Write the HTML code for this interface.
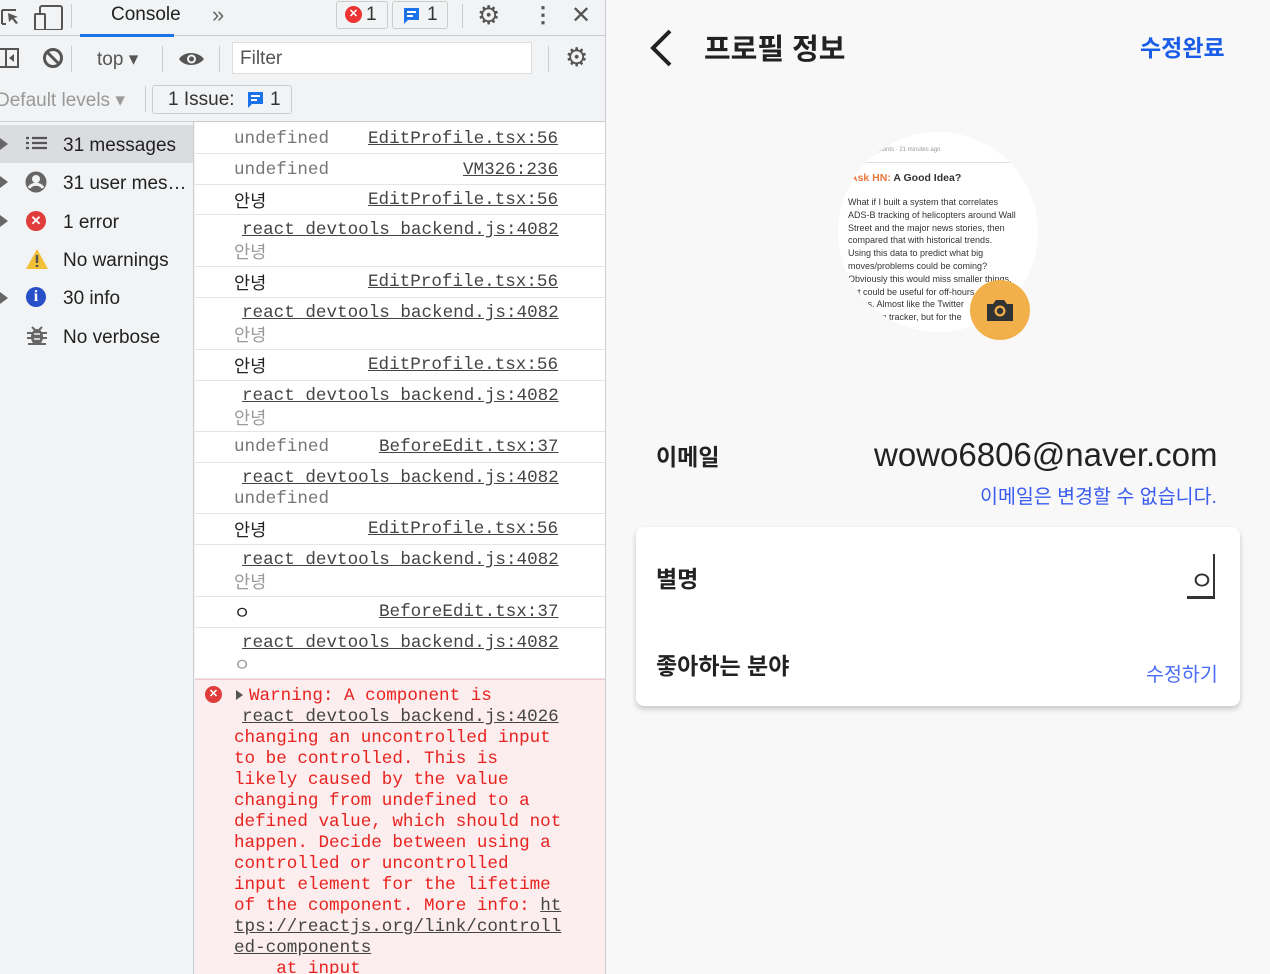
<!DOCTYPE html>
<html><head><meta charset="utf-8"><style>
*{margin:0;padding:0;box-sizing:border-box}
body{width:1270px;height:974px;overflow:hidden;background:#f8f8f8;font-family:"Liberation Sans","Noto Sans CJK KR",sans-serif;position:relative}
.a{position:absolute;white-space:nowrap}
#dt{position:absolute;left:0;top:0;width:606px;height:974px;background:#f1f3f4;border-right:1px solid #cbcdd1;overflow:hidden}
.mono{font-family:"Liberation Mono","Noto Sans CJK KR",monospace;font-size:17.6px}
.row{position:absolute;left:195px;width:410px;border-bottom:1px solid #e5e5e5;background:#fff}
.row .a{margin-top:2px}
.u{text-decoration:underline;color:#444}
.g{color:#777}
.side{font-size:19px;color:#222;margin-top:2px}
.ic{position:absolute;width:20px;height:20px;border-radius:50%;color:#fff;font-size:13px;font-weight:bold;text-align:center;line-height:20px}
.tri{position:absolute;width:0;height:0;border-top:6px solid transparent;border-bottom:6px solid transparent;border-left:8px solid #666}
</style></head><body>
<div id="dt">
 <div class="a" style="left:0;top:0;width:606px;height:36px;border-bottom:1px solid #cbcdd1"></div>
 <svg class="a" style="left:0;top:4px" width="70" height="26"><path d="M2 6h14M2 6v14M2 20h4" stroke="#555" stroke-width="2" fill="none"/><path d="M8 9l10 4-4 1 4 5-2 1-4-5-3 3z" fill="#555"/><rect x="40" y="2" width="22" height="24" rx="2" stroke="#555" stroke-width="2" fill="none"/><rect x="35" y="10" width="10" height="16" rx="1" stroke="#555" stroke-width="2" fill="#f1f3f4"/></svg>
 <div class="a" style="left:71px;top:4px;width:1px;height:24px;background:#ccc"></div>
 <div class="a" style="left:111px;top:4px;font-size:19px;color:#222">Console</div>
 <div class="a" style="left:80px;top:34px;width:94px;height:3px;background:#1a73e8"></div>
 <div class="a" style="left:212px;top:2px;font-size:22px;color:#666">»</div>
 <div class="a" style="left:336px;top:1px;width:52px;height:28px;border:1px solid #ccc;border-radius:3px"></div>
 <div class="ic" style="left:345px;top:6px;width:17px;height:17px;line-height:17px;background:#e33;font-size:11px">✕</div>
 <div class="a" style="left:366px;top:4px;font-size:19px;color:#333">1</div>
 <div class="a" style="left:392px;top:1px;width:56px;height:28px;border:1px solid #ccc;border-radius:3px"></div>
 <svg class="a" style="left:402px;top:6px" width="20" height="20"><path d="M2 2h15v12H6l-4 4z" fill="#1a73e8"/><path d="M5 6h9M5 10h6" stroke="#fff" stroke-width="2"/></svg>
 <div class="a" style="left:427px;top:4px;font-size:19px;color:#333">1</div>
 <div class="a" style="left:462px;top:4px;width:1px;height:24px;background:#ccc"></div>
 <div class="a" style="left:477px;top:0px;font-size:26px;color:#555">⚙</div>
 <div class="a" style="left:532px;top:2px;font-size:22px;color:#555;font-weight:bold">⋮</div>
 <div class="a" style="left:571px;top:1px;font-size:24px;color:#555">✕</div>
 <svg class="a" style="left:0;top:47px" width="24" height="22"><rect x="-2" y="2" width="20" height="18" stroke="#555" stroke-width="2" fill="none"/><path d="M6 2v18" stroke="#555" stroke-width="2"/><path d="M14 7v8l-5-4z" fill="#555"/></svg>
 <svg class="a" style="left:42px;top:47px" width="24" height="24"><circle cx="11" cy="11" r="8.5" stroke="#555" stroke-width="3" fill="none"/><path d="M5 5l12 12" stroke="#555" stroke-width="3"/></svg>
 <div class="a" style="left:71px;top:46px;width:1px;height:26px;background:#ccc"></div>
 <div class="a" style="left:97px;top:48px;font-size:19px;color:#555">top ▾</div>
 <div class="a" style="left:162px;top:46px;width:1px;height:26px;background:#ccc"></div>
 <svg class="a" style="left:178px;top:48px" width="28" height="22"><path d="M1 11C6 3 20 3 26 11C20 19 6 19 1 11z" fill="#555"/><circle cx="13.5" cy="11" r="4.5" fill="#f1f3f4"/><circle cx="13.5" cy="11" r="2.5" fill="#555"/></svg>
 <div class="a" style="left:219px;top:46px;width:1px;height:26px;background:#ccc"></div>
 <div class="a" style="left:232px;top:42px;width:300px;height:32px;background:#fff;border:1px solid #ddd"></div>
 <div class="a" style="left:240px;top:48px;font-size:19px;color:#555">Filter</div>
 <div class="a" style="left:548px;top:46px;width:1px;height:26px;background:#ccc"></div>
 <div class="a" style="left:565px;top:42px;font-size:26px;color:#555">⚙</div>
 <div class="a" style="left:-4px;top:89px;font-size:19px;color:#999">Default levels ▾</div>
 <div class="a" style="left:145px;top:86px;width:1px;height:26px;background:#ccc"></div>
 <div class="a" style="left:152px;top:85px;width:140px;height:29px;border:1px solid #ccc;border-radius:3px"></div>
 <div class="a" style="left:168px;top:89px;font-size:19px;color:#333">1 Issue:</div>
 <svg class="a" style="left:246px;top:90px" width="20" height="20"><path d="M2 2h15v12H6l-4 4z" fill="#1a73e8"/><path d="M5 6h9M5 10h6" stroke="#fff" stroke-width="2"/></svg>
 <div class="a" style="left:270px;top:89px;font-size:19px;color:#333">1</div>
 <div class="a" style="left:0;top:121px;width:606px;height:1px;background:#cbcdd1"></div>
 <div class="a" style="left:0;top:125px;width:193px;height:38px;background:#dadcdf"></div>
 <div class="a" style="left:193px;top:122px;width:1px;height:852px;background:#cbcdd1"></div>
 <div class="tri" style="left:0;top:138px"></div>
 <svg class="a" style="left:25px;top:136px" width="24" height="16"><path d="M1 2h3M1 7h3M1 12h3M7 2h15M7 7h15M7 12h15" stroke="#555" stroke-width="2.2"/></svg>
 <div class="a side" style="left:63px;top:133px">31 messages</div>
 <div class="tri" style="left:0;top:176px"></div>
 <svg class="a" style="left:25px;top:171px" width="22" height="22"><circle cx="11" cy="11" r="10.5" fill="#666"/><circle cx="11" cy="8" r="4" fill="#f1f3f4"/><path d="M4 17c3-5 11-5 14 0" stroke="#f1f3f4" stroke-width="3" fill="none"/></svg>
 <div class="a side" style="left:63px;top:171px">31 user mes…</div>
 <div class="tri" style="left:0;top:215px"></div>
 <div class="ic" style="left:26px;top:211px;background:#e03c3c">✕</div>
 <div class="a side" style="left:63px;top:210px">1 error</div>
 <svg class="a" style="left:25px;top:248px" width="24" height="22"><path d="M12 1L23 21H1z" fill="#f2c037"/><path d="M12 7v8M12 17v2" stroke="#555" stroke-width="2.5"/></svg>
 <div class="a side" style="left:63px;top:248px">No warnings</div>
 <div class="tri" style="left:0;top:292px"></div>
 <div class="ic" style="left:26px;top:287px;background:#2750c8;font-family:'Liberation Serif',serif;font-size:16px">i</div>
 <div class="a side" style="left:63px;top:286px">30 info</div>
 <svg class="a" style="left:26px;top:325px" width="22" height="22"><ellipse cx="11" cy="12" rx="6" ry="8" fill="#666"/><path d="M1 8h20M1 13h20M2 19h18M6 2l3 3M16 2l-3 3" stroke="#666" stroke-width="2"/><path d="M8 9h6M8 14h6" stroke="#f1f3f4" stroke-width="1.5"/></svg>
 <div class="a side" style="left:63px;top:325px">No verbose</div>
 <div class="mono">
 <div class="row" style="top:122px;height:32px"><span class="a g" style="left:39px;top:5px">undefined</span><span class="a u" style="left:173px;top:5px">EditProfile.tsx:56</span></div>
 <div class="row" style="top:154px;height:31px"><span class="a g" style="left:39px;top:4px">undefined</span><span class="a u" style="left:268px;top:4px">VM326:236</span></div>
 <div class="row" style="top:185px;height:30px"><span class="a" style="left:39px;top:1px;color:#222">안녕</span><span class="a u" style="left:173px;top:3px">EditProfile.tsx:56</span></div>
 <div class="row" style="top:215px;height:52px"><span class="a u" style="left:47px;top:3px">react_devtools_backend.js:4082</span><span class="a" style="left:39px;top:22px;color:#999">안녕</span></div>
 <div class="row" style="top:267px;height:31px"><span class="a" style="left:39px;top:1px;color:#222">안녕</span><span class="a u" style="left:173px;top:3px">EditProfile.tsx:56</span></div>
 <div class="row" style="top:298px;height:52px"><span class="a u" style="left:47px;top:3px">react_devtools_backend.js:4082</span><span class="a" style="left:39px;top:22px;color:#999">안녕</span></div>
 <div class="row" style="top:350px;height:31px"><span class="a" style="left:39px;top:1px;color:#222">안녕</span><span class="a u" style="left:173px;top:3px">EditProfile.tsx:56</span></div>
 <div class="row" style="top:381px;height:51px"><span class="a u" style="left:47px;top:3px">react_devtools_backend.js:4082</span><span class="a" style="left:39px;top:22px;color:#999">안녕</span></div>
 <div class="row" style="top:432px;height:31px"><span class="a g" style="left:39px;top:3px">undefined</span><span class="a u" style="left:184px;top:3px">BeforeEdit.tsx:37</span></div>
 <div class="row" style="top:463px;height:51px"><span class="a u" style="left:47px;top:3px">react_devtools_backend.js:4082</span><span class="a g" style="left:39px;top:24px">undefined</span></div>
 <div class="row" style="top:514px;height:31px"><span class="a" style="left:39px;top:1px;color:#222">안녕</span><span class="a u" style="left:173px;top:3px">EditProfile.tsx:56</span></div>
 <div class="row" style="top:545px;height:52px"><span class="a u" style="left:47px;top:3px">react_devtools_backend.js:4082</span><span class="a" style="left:39px;top:22px;color:#999">안녕</span></div>
 <div class="row" style="top:597px;height:31px"><span class="a" style="left:39px;top:1px;color:#222">ㅇ</span><span class="a u" style="left:184px;top:3px">BeforeEdit.tsx:37</span></div>
 <div class="row" style="top:628px;height:51px"><span class="a u" style="left:47px;top:3px">react_devtools_backend.js:4082</span><span class="a" style="left:39px;top:22px;color:#999">ㅇ</span></div>
 <div class="a" style="left:195px;top:679px;width:410px;height:300px;background:#fcedee;border-top:1px solid #f6c9cc"></div>
 <div class="ic" style="left:205px;top:686px;width:17px;height:17px;line-height:17px;background:#e03c3c;font-size:11px;font-family:'Liberation Sans',sans-serif">✕</div>
 <div class="tri" style="left:236px;top:690px;border-top-width:5px;border-bottom-width:5px;border-left-width:7px;border-left-color:#555"></div>
 <div class="a" style="left:234px;top:686px;line-height:21px;color:#e8231f;white-space:pre"><span style="padding-left:15px">Warning: A component is</span>
<span class="u" style="padding-left:8px">react_devtools_backend.js:4026</span>
changing an uncontrolled input
to be controlled. This is
likely caused by the value
changing from undefined to a
defined value, which should not
happen. Decide between using a
controlled or uncontrolled
input element for the lifetime
of the component. More info: <span class="u">ht</span>
<span class="u">tps://reactjs.org/link/controll</span>
<span class="u">ed-components</span>
    at input</div>
 </div>
</div>
<svg class="a" style="left:646px;top:28px" width="30" height="40"><path d="M24 3L7 20l17 17" stroke="#222" stroke-width="4" fill="none"/></svg>
<div class="a" style="left:704px;top:26px;font-size:29px;font-weight:bold;color:#222">프로필 정보</div>
<div class="a" style="left:1140px;top:29px;font-size:23px;font-weight:bold;color:#1a5ee8">수정완료</div>
<div class="a" style="left:838px;top:132px;width:200px;height:200px;border-radius:50%;background:#fff;overflow:hidden;font-size:9px;color:#333;line-height:12.8px">
 <div class="a" style="left:40px;top:12px;font-size:6px;color:#999">points · 21 minutes ago</div>
 <div class="a" style="left:0;top:30px;width:200px;height:1px;background:#ddd"></div>
 <div class="a" style="left:12px;top:40px;font-size:10.5px;font-weight:bold"><span style="color:#e8773a">Ask HN:</span> A Good Idea?</div>
 <div class="a" style="left:10px;top:64px;white-space:pre">What if I built a system that correlates
ADS-B tracking of helicopters around Wall
Street and the major news stories, then
compared that with historical trends.
Using this data to predict what big
moves/problems could be coming?
Obviously this would miss smaller things,
but could be useful for off-hours
things. Almost like the Twitter
Pentagon tracker, but for the</div>
</div>
<div class="a" style="left:970px;top:280px;width:60px;height:60px;border-radius:50%;background:#f2b04a"></div>
<svg class="a" style="left:985px;top:295px" width="30" height="30"><path d="M2 9h6l3-4h8l3 4h6v17H2z" fill="#333"/><circle cx="15" cy="16" r="5.5" fill="#f2b04a"/><circle cx="15" cy="16" r="3.2" fill="#333"/></svg>
<div class="a" style="left:656px;top:438px;font-size:23px;font-weight:bold;color:#222">이메일</div>
<div class="a" style="left:874px;top:436px;font-size:33px;color:#222">wowo6806@naver.com</div>
<div class="a" style="left:980px;top:480px;font-size:19.5px;color:#3a5cf0">이메일은 변경할 수 없습니다.</div>
<div class="a" style="left:636px;top:527px;width:604px;height:179px;background:#fff;border-radius:8px;box-shadow:0 3px 6px rgba(0,0,0,.2)"></div>
<div class="a" style="left:656px;top:560px;font-size:23px;font-weight:bold;color:#222">별명</div>
<div class="a" style="left:1190px;top:561px;font-size:26px;color:#333">ㅇ</div>
<div class="a" style="left:1213px;top:554px;width:2px;height:45px;background:#333"></div>
<div class="a" style="left:1187px;top:596px;width:28px;height:3px;background:#333"></div>
<div class="a" style="left:656px;top:647px;font-size:23px;font-weight:bold;color:#222">좋아하는 분야</div>
<div class="a" style="left:1146px;top:658px;font-size:19.5px;color:#4a6cf5">수정하기</div>
</body></html>
